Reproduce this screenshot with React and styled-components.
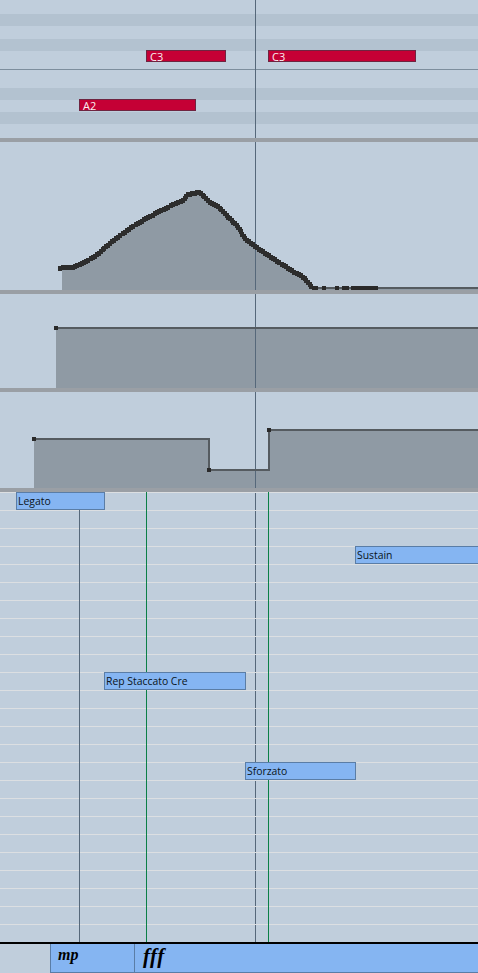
import React from "react";
import styled, { createGlobalStyle } from "styled-components";

const GlobalStyle = createGlobalStyle`
  html, body {
    margin: 0;
    padding: 0;
    background: #c0cedc;
    overflow: hidden;
  }
`;

const Editor = styled.div`
  width: 478px;
  height: 973px;
  display: flex;
  flex-direction: column;
  overflow: hidden;
  background: #c0cedc;
  font-family: "Open Sans", sans-serif;
`;

const Pane = styled.section`
  position: relative;
  flex: none;
  height: ${(p) => p.$height}px;
  overflow: hidden;
`;

const Divider = styled.div`
  flex: none;
  height: 4px;
  background: #9a9fa5;
`;

// vertical marker lines: playhead, note starts
const Marker = styled.div`
  position: absolute;
  top: ${(p) => p.$top || 0}px;
  bottom: 0;
  left: ${(p) => p.$x}px;
  width: 1px;
  background: ${(p) => p.$color || "#56687a"};
`;

const Stripe = styled.div`
  height: ${(p) => p.$h}px;
  background: ${(p) => (p.$dark ? "#b3c2d0" : "#c0cedc")};
  border-bottom: ${(p) => (p.$octave ? "1px solid #7d8e9d" : "0")};
`;

const Note = styled.div`
  position: absolute;
  top: ${(p) => p.$top}px;
  left: ${(p) => p.$x}px;
  width: ${(p) => p.$w}px;
  height: 12px;
  box-sizing: border-box;
  padding-left: 3px;
  background: #c50035;
  border: 1px solid #6e2440;
  color: #fbeef2;
  font-size: 11px;
  line-height: 11px;
`;

const Curve = styled.svg`
  display: block;
  width: 478px;
  height: 100%;
`;

const Grid = styled.div`
  position: absolute;
  inset: 0;
  background: linear-gradient(to bottom, transparent 17px, #dcdfe2 17px) 0 1px / 100% 18px;
`;

const Region = styled.div`
  position: absolute;
  top: ${(p) => p.$top}px;
  left: ${(p) => p.$x}px;
  width: ${(p) => p.$w}px;
  height: 18px;
  box-sizing: border-box;
  padding-left: 1px;
  background: #85b5f2;
  border: 1px solid #5a7da6;
  color: #0a1420;
  font-size: 10.4px;
  line-height: 17px;
  white-space: nowrap;
`;

const Dynamics = styled.div`
  flex: 1;
  display: flex;
  padding-left: 50px;
  border-top: 2px solid #000;
`;

const Dynamic = styled.div`
  flex: ${(p) => (p.$grow ? 1 : "none")};
  width: ${(p) => (p.$grow ? "auto" : "84px")};
  box-sizing: border-box;
  padding-left: ${(p) => (p.$grow ? "8px" : "7px")};
  background: #85b5f2;
  border-left: 1px solid #5a7da6;
  border-bottom: 1px solid #5a7da6;
  color: #000;
  font-family: "Liberation Serif", serif;
  font-style: italic;
  font-weight: bold;
  font-size: ${(p) => (p.$grow ? "21px" : "16px")};
  letter-spacing: ${(p) => (p.$grow ? "0.5px" : "0")};
  line-height: ${(p) => (p.$grow ? "25px" : "22px")};
  overflow: hidden;
`;

const stripes = [
  [14], [12, 1], [13], [12, 1], [18, 0, 1], [18], [12, 1], [12], [12, 1], [13],
];

const notes = [
  { name: "C3", top: 50, x: 146, w: 80 },
  { name: "C3", top: 50, x: 268, w: 148 },
  { name: "A2", top: 99, x: 79, w: 117 },
];

const regions = [
  { name: "Legato", top: 0, x: 16, w: 89 },
  { name: "Sustain", top: 54, x: 355, w: 130 },
  { name: "Rep Staccato Cre", top: 180, x: 104, w: 142 },
  { name: "Sforzato", top: 270, x: 245, w: 111 },
];

// velocity curve, y values relative to the lane top (142)
const curve = [
  [60, 125.7], [66, 124.7], [73, 124.7], [81.7, 121.3], [95, 113.7], [110, 101], [126.7, 88],
  [140, 79.7], [156.7, 70.3], [173, 62.3], [183, 58], [188, 52], [196.7, 50], [200.7, 50.7],
  [210, 59.7], [218, 63.7], [230, 76.3], [236.7, 83], [246.7, 98], [256.7, 105.3], [273, 116],
  [290, 127], [303, 134.7], [313, 145.3],
];

const curvePath = curve.map((pt) => pt.join(",")).join(" ");

// one square per controller event, laid along the curve
const curveEvents = curve.slice(1).flatMap(([x, y], i) => {
  const [px, py] = curve[i];
  const steps = Math.max(1, Math.round(Math.hypot(x - px, y - py) / 2.5));
  return Array.from({ length: steps }, (_, k) => [
    Math.round(px + ((x - px) * k) / steps),
    Math.round(py + ((y - py) * k) / steps),
  ]);
});

const flatDots = [
  [312, 6], [322, 4], [335, 4], [342, 7], [351, 27],
];

const Handle = ({ x, y }) => <rect x={x - 2} y={y - 2} width="4" height="4" fill="#2a2a2a" />;

const App = () => (
  <Editor>
    <GlobalStyle />

    <Pane $height={138}>
      {stripes.map(([h, dark, octave], i) => (
        <Stripe key={i} $h={h} $dark={dark} $octave={octave} />
      ))}
      <Marker $x={255} />
      {notes.map((n, i) => (
        <Note key={i} $top={n.top} $x={n.x} $w={n.w}>{n.name}</Note>
      ))}
    </Pane>
    <Divider />

    <Pane $height={148}>
      <Curve viewBox="0 0 478 148">
        <polygon points={`62,148 62,125 ${curvePath} 315,146 478,146 478,148`} fill="#8f9aa4" />
        <line x1="255.5" y1="0" x2="255.5" y2="148" stroke="#56687a" />
        <line x1="313" y1="146" x2="478" y2="146" stroke="#555b60" strokeWidth="2" />
        {curveEvents.map(([x, y], i) => (
          <rect key={i} x={x - 2} y={y - 2} width="4" height="5" fill="#2d2d2d" />
        ))}
        {flatDots.map(([x, w]) => (
          <rect key={x} x={x} y="144" width={w} height="4" fill="#2a2a2a" />
        ))}
      </Curve>
    </Pane>
    <Divider />

    <Pane $height={94}>
      <Curve viewBox="0 0 478 94">
        <rect x="56" y="34" width="422" height="60" fill="#8f9aa4" />
        <line x1="255.5" y1="0" x2="255.5" y2="94" stroke="#56687a" />
        <line x1="56" y1="34" x2="478" y2="34" stroke="#555b60" strokeWidth="2" />
        <Handle x={56} y={34} />
      </Curve>
    </Pane>
    <Divider />

    <Pane $height={96}>
      <Curve viewBox="0 0 478 96">
        <polygon points="34,47 209,47 209,78 269,78 269,38 478,38 478,96 34,96" fill="#8f9aa4" />
        <line x1="255.5" y1="0" x2="255.5" y2="96" stroke="#56687a" />
        <polyline points="34,47 209,47 209,78 269,78 269,38 478,38" fill="none" stroke="#555b60" strokeWidth="2" />
        <Handle x={34} y={47} />
        <Handle x={209} y={78} />
        <Handle x={269} y={38} />
      </Curve>
    </Pane>
    <Divider />

    <Pane $height={450}>
      <Marker $x={255} />
      <Grid />
      <Marker $x={79} $top={18} />
      <Marker $x={146} $color="#0b8047" />
      <Marker $x={268} $color="#0b8047" />
      {regions.map((r) => (
        <Region key={r.name} $top={r.top} $x={r.x} $w={r.w}>{r.name}</Region>
      ))}
    </Pane>

    <Dynamics>
      <Dynamic>mp</Dynamic>
      <Dynamic $grow>fff</Dynamic>
    </Dynamics>
  </Editor>
);

export default App;
